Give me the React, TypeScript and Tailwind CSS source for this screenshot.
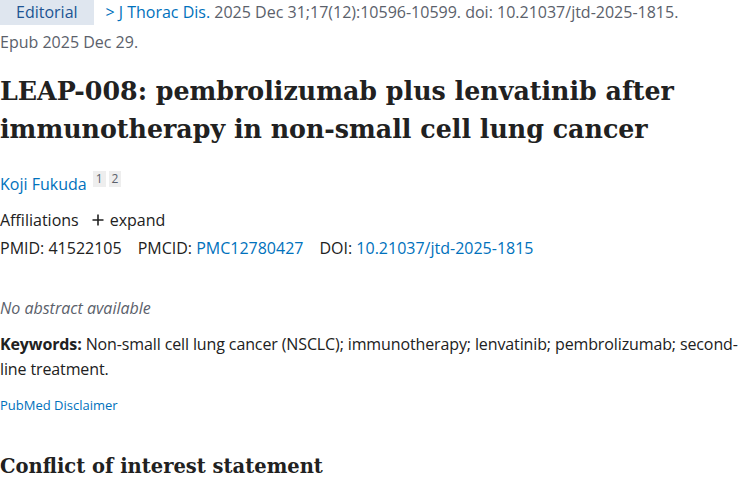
import React from 'react';

const sans = "font-['Open_Sans',sans-serif]";
const serif = "font-['DejaVu_Serif',serif]";

export default function App() {
  return (
    <div className={`w-[750px] h-[500px] overflow-hidden bg-white text-[#212121] ${sans}`}>
      <div className="w-[748px]">
        {/* Citation header */}
        <div className="text-[16px] leading-[25px]">
          <span className="inline-block bg-[#dfe6ef] text-[#205493] px-4 mr-3">Editorial</span>
          <span className="text-[#0071bc]">
            <span className="mr-1">&gt;</span>J Thorac Dis.
          </span>{' '}
          <span className="text-[#5b616b]">2025 Dec 31;17(12):10596-10599. doi: 10.21037/jtd-2025-1815.</span>
          <div className="text-[#5b616b] mt-[5px]">Epub 2025 Dec 29.</div>
        </div>

        {/* Title */}
        <h1 className={`${serif} font-bold text-[25.3px] leading-[38px] mt-[17px] text-[#212121]`}>
          LEAP-008: pembrolizumab plus lenvatinib after immunotherapy in non-small cell lung cancer
        </h1>

        {/* Authors */}
        <div className="mt-[23px] text-[16px] leading-6 flex items-start">
          <a className="text-[#0071bc] mt-[1px]">Koji Fukuda</a>
          <span className="ml-[6px] text-[12px] leading-[16px] text-[#5b616b] bg-[#eeeeee] px-[3px]">1</span>
          <span className="ml-[3px] text-[12px] leading-[16px] text-[#5b616b] bg-[#eeeeee] px-[3px]">2</span>
        </div>

        <div className="mt-[12px] text-[16px] leading-6 flex items-center">
          <span>Affiliations</span>
          <span className="ml-[13px] flex items-center">
            <svg width="12" height="12" viewBox="0 0 12 12" className="mr-[6px]">
              <path d="M6 0.5v11M0.5 6h11" stroke="#212121" strokeWidth="1.6" />
            </svg>
            expand
          </span>
        </div>

        <div className="mt-[4px] text-[16px] leading-6 flex gap-[16px]">
          <span>PMID: 41522105</span>
          <span>
            PMCID: <a className="text-[#0071bc]">PMC12780427</a>
          </span>
          <span>
            DOI: <a className="text-[#0071bc]">10.21037/jtd-2025-1815</a>
          </span>
        </div>

        {/* Abstract */}
        <p className="mt-[36px] text-[16px] leading-6 italic text-[#5b616b]">No abstract available</p>

        <p className="mt-[12px] text-[16px] leading-[25px] tracking-[-0.12px]">
          <strong className="font-bold">Keywords:</strong> Non-small cell lung cancer (NSCLC); immunotherapy;
          lenvatinib; pembrolizumab; second-line treatment.
        </p>

        <a className="block mt-[13px] text-[13px] leading-5 text-[#0071bc]">PubMed Disclaimer</a>

        <h2 className={`${serif} font-bold text-[19.5px] leading-[30px] mt-[37px]`}>Conflict of interest statement</h2>

        <p className="mt-[16px] text-[16px] leading-6">
          Conflicts of Interest: The author has completed the ICMJE uniform disclosure form.
        </p>
      </div>
    </div>
  );
}
